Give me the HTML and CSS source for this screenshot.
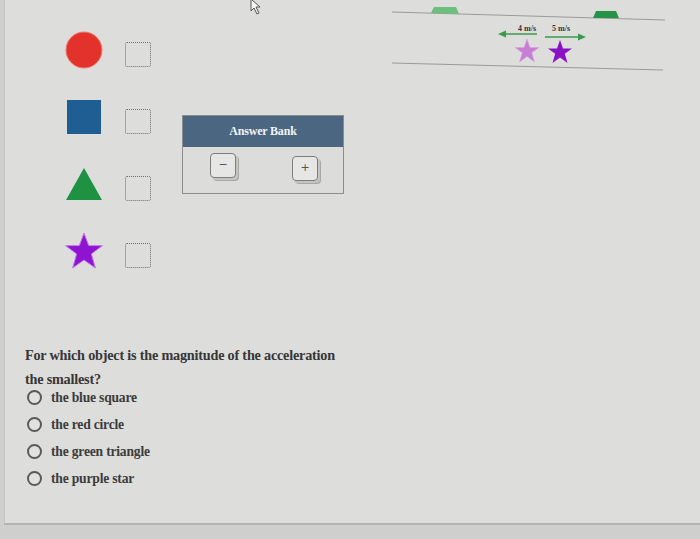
FILE: index.html
```html
<!DOCTYPE html>
<html>
<head>
<meta charset="utf-8">
<link rel="stylesheet" href="styles.css">
</head>
<body>
<div class="panel">
  <svg class="cursor" width="16" height="16" viewBox="0 0 16 16"><path d="M2 0 L2 12 L5 9 L8 15 L10 14 L7 8 L11 8 Z" fill="#f4f4f4" stroke="#555" stroke-width="1"/></svg>
  <div class="top">
    <div class="shapes">
      <div class="row">
        <div class="shape"><svg width="38" height="38" viewBox="0 0 38 38"><circle cx="19" cy="19" r="18" fill="#e2322b" stroke="#f07a6e" stroke-width="1"/></svg></div>
        <div class="drop"></div>
      </div>
      <div class="row">
        <div class="shape"><svg width="38" height="38" viewBox="0 0 38 38"><rect x="2" y="2" width="34" height="34" fill="#1f5e93"/></svg></div>
        <div class="drop"></div>
      </div>
      <div class="row">
        <div class="shape"><svg width="38" height="38" viewBox="0 0 38 38"><polygon points="19,3 37,35 1,35" fill="#1e9142"/></svg></div>
        <div class="drop"></div>
      </div>
      <div class="row">
        <div class="shape"><svg width="40" height="38" viewBox="0 0 40 38"><polygon points="20,1 24.7,13.6 38.5,13.6 27.4,22 31.4,36 20,28 8.6,36 12.6,22 1.5,13.6 15.3,13.6" fill="#8f14d2" stroke="#c47ae8" stroke-width="1"/></svg></div>
        <div class="drop"></div>
      </div>
    </div>
    <div class="bank">
      <div class="bank-head">Answer Bank</div>
      <div class="bank-body">
        <div class="btn">−</div>
        <div class="btn btn-low">+</div>
      </div>
    </div>
    <svg class="diagram" width="276" height="74" viewBox="0 0 276 74">
      <line x1="2" y1="12" x2="275" y2="20" stroke="#9a9a9a" stroke-width="1"/>
      <polygon points="41,13 44,7 66,7 69,14" fill="#6cbf7c"/>
      <polygon points="203,18 206,11 226,11 229,18" fill="#259447"/>
      <line x1="2" y1="63" x2="273" y2="70" stroke="#9a9a9a" stroke-width="1"/>
      <line x1="114" y1="34" x2="147" y2="34" stroke="#3a9a4c" stroke-width="1.6"/>
      <polygon points="108,34 116,30.5 116,37.5" fill="#3a9a4c"/>
      <line x1="155" y1="37" x2="189" y2="37" stroke="#3a9a4c" stroke-width="1.6"/>
      <polygon points="196,37 188,33.5 188,40.5" fill="#3a9a4c"/>
      <text x="137" y="31" class="lbl" text-anchor="middle">4 m/s</text>
      <text x="171" y="31" class="lbl" text-anchor="middle">5 m/s</text>
      <polygon points="137,39 140,47.5 149,47.5 141.8,52.8 144.5,62 137,56.5 129.5,62 132.2,52.8 125,47.5 134,47.5" fill="#c77fd6" stroke="#d9a6e2" stroke-width="0.6"/>
      <polygon points="170,40 173,48.5 182,48.5 174.8,53.8 177.5,63 170,57.5 162.5,63 165.2,53.8 158,48.5 167,48.5" fill="#8a12c6"/>
    </svg>
  </div>
  <div class="question">
    <p class="prompt">For which object is the magnitude of the acceleration<br>the smallest?</p>
    <ul class="options">
      <li><span class="radio"></span>the blue square</li>
      <li><span class="radio"></span>the red circle</li>
      <li><span class="radio"></span>the green triangle</li>
      <li><span class="radio"></span>the purple star</li>
    </ul>
  </div>
</div>
</body>
</html>
```

FILE: styles.css
```css
html, body {
  margin: 0;
  padding: 0;
}
body {
  width: 700px;
  height: 539px;
  background: #cfcfcd;
  font-family: "Liberation Serif", "Times New Roman", serif;
  color: #2e2e2e;
  overflow: hidden;
}
.panel {
  position: relative;
  margin-left: 4px;
  width: 696px;
  height: 525px;
  background: #dddddb;
  border-left: 1px solid #c4c4c2;
  border-bottom: 2px solid #b3b3b1;
  box-sizing: border-box;
}
.cursor {
  position: absolute;
  left: 244px;
  top: -1px;
}
.top {
  display: flex;
  align-items: flex-start;
  height: 343px;
}
.shapes {
  display: flex;
  flex-direction: column;
  margin-left: 59px;
  padding-top: 16px;
}
.row {
  display: flex;
  align-items: center;
  height: 67px;
}
.shape {
  width: 40px;
  height: 38px;
  display: flex;
  justify-content: center;
  align-items: center;
}
.drop {
  width: 24px;
  height: 23px;
  margin-left: 21px;
  margin-top: 10px;
  border: 1.5px dotted #6e6e6e;
  border-radius: 2px;
}
.bank {
  margin-left: 31px;
  margin-top: 115px;
  width: 162px;
  box-sizing: border-box;
  border: 1px solid #8c8c8c;
  background: #dcdcda;
}
.bank-head {
  background: #4b6681;
  color: #f2f4f6;
  font-weight: bold;
  font-size: 12px;
  text-align: center;
  height: 31px;
  line-height: 30px;
  letter-spacing: -0.2px;
}
.bank-body {
  display: flex;
  justify-content: space-between;
  align-items: flex-start;
  padding: 6px 25px 0 27px;
  height: 46px;
  box-sizing: border-box;
}
.btn {
  width: 24px;
  height: 23px;
  border: 1px solid #7d7d7d;
  border-radius: 4px;
  background: #e6e6e4;
  box-shadow: 2px 2px 0 #c4c4c2, 3px 3px 0 #a8a8a6;
  font-family: "DejaVu Sans", sans-serif;
  font-size: 11px;
  color: #555;
  text-align: center;
  line-height: 22px;
}
.btn-low {
  margin-top: 3px;
}
.diagram {
  margin-left: auto;
  margin-right: 34px;
  margin-top: 0;
}
.lbl {
  font-family: "Liberation Serif", serif;
  font-weight: bold;
  font-size: 8px;
  fill: #333;
}
.question {
  padding-left: 20px;
}
.prompt {
  margin: 0;
  font-size: 14.2px;
  line-height: 24px;
  font-weight: bold;
  color: #363636;
  letter-spacing: -0.2px;
}
.options {
  list-style: none;
  margin: -7px 0 0 0;
  padding: 0 0 0 2px;
}
.options li {
  display: flex;
  align-items: center;
  height: 27px;
  font-size: 13.6px;
  font-weight: bold;
  color: #3c3c3c;
  letter-spacing: -0.2px;
}
.radio {
  width: 11px;
  height: 11px;
  border: 2px solid #5a5a5a;
  border-radius: 50%;
  margin-right: 9px;
  background: #e2e2e0;
}
```
